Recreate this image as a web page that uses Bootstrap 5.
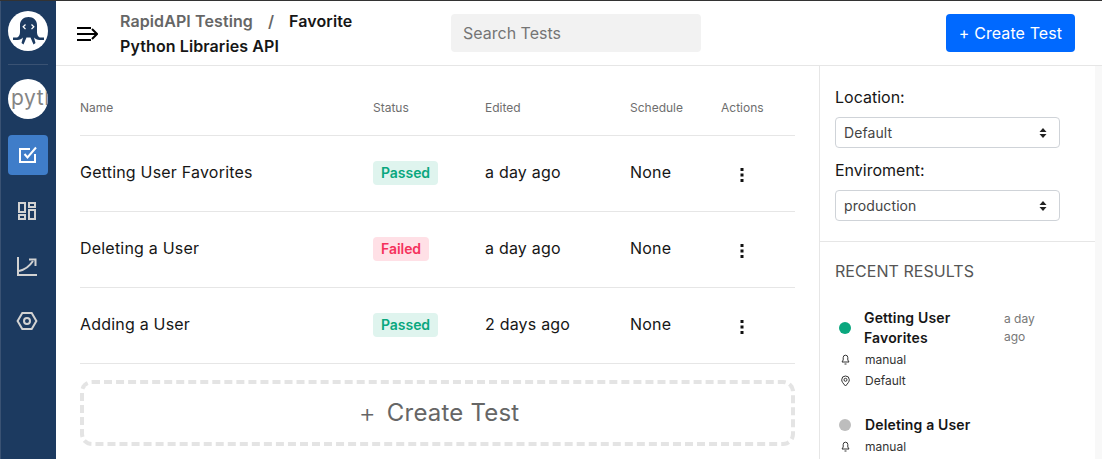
<!DOCTYPE html>
<html lang="en">
<head>
<meta charset="utf-8">
<title>Tests</title>
<link rel="stylesheet" href="https://cdn.jsdelivr.net/npm/bootstrap@5.3.0/dist/css/bootstrap.min.css">
<style>
html,body{height:459px;overflow:hidden;}
body{font-family:Inter,"Liberation Sans",sans-serif;color:#161616;font-size:16px;background:#fff;}
.app-shell{height:459px;border-top:1px solid #333;}
.side-rail{width:56px;flex:0 0 56px;background:#1c3a60;border-left:1px solid #3a5273;padding-right:1px;}
.logo-disc{width:40px;height:40px;border-radius:50%;background:#fff;overflow:hidden;}
.logo-top{margin-top:10px;}
.rail-rule{width:40px;height:1px;background:#3a5273;margin-top:13px;margin-bottom:14px;}
.py-disc{font-size:21px;color:#858585;line-height:38px;padding-left:3px;white-space:nowrap;letter-spacing:.6px;}
.rail-item{width:40px;height:40px;border-radius:4px;margin-bottom:15px;color:#d2d2d2;padding-right:2px;}
.rail-active{background:#3f7dc9;color:#fff;margin-top:16px;margin-bottom:16px;padding-right:0;}
.top-head{height:65px;border-bottom:1px solid #e6e6e6;padding-left:21px;padding-right:27px;}
.menu-glyph{margin-top:2px;}
.crumbs{width:331px;margin-left:22px;margin-top:2px;font-size:16px;font-weight:600;line-height:25px;letter-spacing:.1px;}
.crumb-muted{color:#666;}
.crumb-sep{color:#666;margin:0 15px;}
.search-box{width:250px;height:38px;background:#f2f2f2;border-radius:4px;color:#757575;font-size:16px;line-height:38px;padding-left:12px;margin-right:auto;}
.create-main{background:#0069ff;color:#fff;border:0;border-radius:4px;width:129px;height:38px;font-size:16px;padding:0;letter-spacing:.1px;}
.work-area{background:#f8f8f8;}
.list-pane{width:763px;flex:0 0 763px;padding:0 24px;background:#fff;}
.right-pane{width:276px;flex:0 0 276px;border-left:1px solid #e6e6e6;background:#fff;}
.head-row{height:70px;border-bottom:1px solid #e6e6e6;font-size:12px;color:#6e6e6e;padding-top:15px;align-items:center;}
.c-name{width:293px;}
.c-status{width:112px;}
.c-edited{width:145px;}
.c-sched{width:91px;}
.test-row{height:76px;border-bottom:1px solid #e6e6e6;font-size:16px;letter-spacing:.2px;align-items:center;padding-bottom:3px;}
.state-pill{display:inline-block;font-size:14px;font-weight:600;border-radius:4px;padding:0 8px;height:24px;line-height:24px;letter-spacing:-.05px;}
.state-ok{background:#dff4ee;color:#0aa77e;}
.state-bad{background:#ffe0e6;color:#f5325c;}
.dots{width:42px;margin-top:3px;}
.add-box{height:66px;margin-top:16px;padding-left:3px;border:4px dashed #e4e4e4;border-radius:12px;font-size:24px;color:#666;letter-spacing:.2px;}
.add-box span{margin-right:11px;font-weight:300;font-size:26px;line-height:1;}
.filters{padding:19px 35px 20px 15px;border-bottom:1px solid #e6e6e6;width:100%;height:176px;}
.filters label{display:block;font-size:16px;line-height:24px;margin-bottom:8px;}
.pick{height:31px;width:225px;font-size:14px;padding:0 8px;color:#444;border:1px solid #cfd3d8;border-radius:4px;background-image:url("data:image/svg+xml,%3csvg xmlns='http://www.w3.org/2000/svg' viewBox='0 0 8 12'%3e%3cpath fill='%23222' d='M4 1l3.500 4h-7zM4 11L.5 7h7z'/%3e%3c/svg%3e");background-size:8px 12px;background-position:right 12px center;letter-spacing:.1px;margin-bottom:10px;box-shadow:none;}
.recent-wrap{padding:20px 15px 0 15px;}
.recent-title{font-size:16px;color:#555;letter-spacing:.05px;line-height:18px;margin-bottom:28px;}
.res-row{display:flex;align-items:center;}
.res-dot{width:12px;height:12px;border-radius:50%;flex:0 0 12px;margin-left:4px;margin-right:13px;}
.res-name{font-size:14px;font-weight:600;line-height:20px;width:140px;letter-spacing:.15px;}
.res-when{font-size:12px;color:#777;line-height:18px;width:50px;}
.res-meta{display:flex;align-items:center;font-size:12px;color:#333;line-height:21px;margin-left:6px;}
.res-meta svg{margin-right:15px;flex:0 0 9px;}
.res-first{margin-top:1px;}
.res-gap{margin-bottom:24px;}
.res-name-wide{padding-left:1px;}
.ok-dot{background:#0aa77e;}
.idle-dot{background:#bdbdbd;}
</style>
</head>
<body>
<div class="app-shell d-flex">
  <nav class="side-rail d-flex flex-column align-items-center">
    <div class="logo-disc logo-top">
      <svg width="40" height="40" viewBox="0 0 40 40" fill="#1c3a60"><path d="M20.500 6C15.500 6 12 9.500 12 14v7c0 3-1.500 5.500-3.500 5.500H5V29h4.500c2.500 0 4-1 5.500-2.500L13.500 32l2 1.500 3-7h4l3 7 2-1.500-1.500-5.500c1.500 1.500 3 2.500 5.500 2.500h4.500v-2.500H32.500c-2 0-3.500-2.500-3.500-5.500v-7c0-4.500-3.500-8-8.500-8z"/><path d="M17.500 13.500l-2.300 2.300 2.300 2.300M23.500 13.500l2.300 2.300-2.300 2.300" fill="none" stroke="#fff" stroke-width="1.300"/></svg>
    </div>
    <div class="rail-rule"></div>
    <div class="logo-disc py-disc">pyth</div>
    <div class="rail-item rail-active d-flex align-items-center justify-content-center">
      <svg width="20" height="20" viewBox="0 0 20 20" fill="none" stroke="#fff" stroke-width="2"><path d="M17 9v8H2V4h10"/><path d="M6.500 9l3 3.500L18 2.500"/></svg>
    </div>
    <div class="rail-item d-flex align-items-center justify-content-center">
      <svg width="20" height="20" viewBox="0 0 20 20" fill="none" stroke="#d2d2d2" stroke-width="2"><rect x="2" y="2" width="6" height="9"/><rect x="2" y="14" width="6" height="4"/><rect x="12" y="2" width="6" height="4"/><rect x="12" y="9" width="6" height="9"/></svg>
    </div>
    <div class="rail-item d-flex align-items-center justify-content-center">
      <svg width="20" height="20" viewBox="0 0 20 20" fill="none" stroke="#d2d2d2" stroke-width="2"><path d="M1 1v18h19"/><path d="M2 15c5-1 10-4 14-10"/><path d="M12 3.500h6.500V10"/></svg>
    </div>
    <div class="rail-item d-flex align-items-center justify-content-center">
      <svg width="22" height="20" viewBox="0 0 22 20" fill="none" stroke="#d2d2d2" stroke-width="2"><path d="M6.300 2h9.400l4.700 8-4.700 8H6.300L1.600 10z"/><circle cx="11" cy="10" r="3"/></svg>
    </div>
  </nav>
  <div class="flex-grow-1 d-flex flex-column">
    <header class="top-head d-flex align-items-center">
      <svg class="menu-glyph" width="21" height="16" viewBox="0 0 21 16" fill="none" stroke="#000" stroke-width="2"><path d="M0 2h14M0 8h19M0 14h14M15 3l5 5-5 5"/></svg>
      <div class="crumbs"><span class="crumb-muted">RapidAPI Testing</span><span class="crumb-sep">/</span>Favorite<br>Python Libraries API</div>
      <div class="search-box">Search Tests</div>
      <button class="btn create-main" type="button">+ Create Test</button>
    </header>
    <div class="work-area d-flex flex-grow-1 overflow-hidden">
      <main class="list-pane">
        <div class="head-row d-flex"><div class="c-name">Name</div><div class="c-status">Status</div><div class="c-edited">Edited</div><div class="c-sched">Schedule</div><div>Actions</div></div>
        <div class="test-row d-flex"><div class="c-name">Getting User Favorites</div><div class="c-status"><span class="state-pill state-ok">Passed</span></div><div class="c-edited">a day ago</div><div class="c-sched">None</div><div class="dots text-center"><svg width="4" height="14" viewBox="0 0 4 14" fill="#111"><rect x=".5" width="3" height="3"/><rect x=".5" y="5.500" width="3" height="3"/><rect x=".5" y="11" width="3" height="3"/></svg></div></div>
        <div class="test-row d-flex"><div class="c-name">Deleting a User</div><div class="c-status"><span class="state-pill state-bad">Failed</span></div><div class="c-edited">a day ago</div><div class="c-sched">None</div><div class="dots text-center"><svg width="4" height="14" viewBox="0 0 4 14" fill="#111"><rect x=".5" width="3" height="3"/><rect x=".5" y="5.500" width="3" height="3"/><rect x=".5" y="11" width="3" height="3"/></svg></div></div>
        <div class="test-row d-flex"><div class="c-name">Adding a User</div><div class="c-status"><span class="state-pill state-ok">Passed</span></div><div class="c-edited">2 days ago</div><div class="c-sched">None</div><div class="dots text-center"><svg width="4" height="14" viewBox="0 0 4 14" fill="#111"><rect x=".5" width="3" height="3"/><rect x=".5" y="5.500" width="3" height="3"/><rect x=".5" y="11" width="3" height="3"/></svg></div></div>
        <div class="add-box d-flex align-items-center justify-content-center"><span>+</span>Create Test</div>
      </main>
      <aside class="right-pane">
        <div class="filters">
          <label>Location:</label>
          <select class="form-select pick"><option>Default</option></select>
          <label>Enviroment:</label>
          <select class="form-select pick"><option>production</option></select>
        </div>
        <div class="recent-wrap">
          <div class="recent-title">RECENT RESULTS</div>
          <div class="res-row"><span class="res-dot ok-dot"></span><div class="res-name">Getting User Favorites</div><div class="res-when">a day ago</div></div>
          <div class="res-meta res-first"><svg width="9" height="11" viewBox="0 0 9 11" fill="none" stroke="#333"><path d="M1 8h7L6.800 6V3.500a2.300 2.300 0 0 0-4.600 0V6zM3.500 10h2"/></svg>manual</div>
          <div class="res-meta res-gap"><svg width="9" height="12" viewBox="0 0 9 12" fill="none" stroke="#333"><path d="M4.500 11C1.800 8 .7 6.500.7 4.800a3.800 3.800 0 0 1 7.600 0C8.300 6.500 7.200 8 4.500 11z"/><circle cx="4.500" cy="4.800" r="1.500"/></svg>Default</div>
          <div class="res-row"><span class="res-dot idle-dot"></span><div class="res-name res-name-wide text-nowrap">Deleting a User</div></div>
          <div class="res-meta res-first"><svg width="9" height="11" viewBox="0 0 9 11" fill="none" stroke="#333"><path d="M1 8h7L6.800 6V3.500a2.300 2.300 0 0 0-4.600 0V6zM3.500 10h2"/></svg>manual</div>
        </div>
      </aside>
    </div>
  </div>
</div>
<script src="https://cdn.jsdelivr.net/npm/bootstrap@5.3.0/dist/js/bootstrap.bundle.min.js"></script>
</body>
</html>
